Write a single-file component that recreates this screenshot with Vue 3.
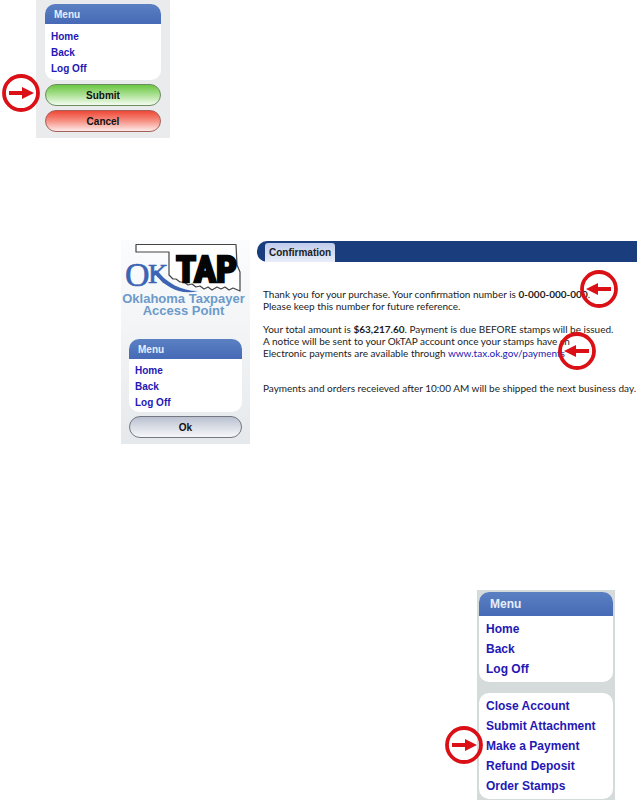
<script setup>
import { h } from 'vue'

const mainLinks = ['Home', 'Back', 'Log Off']
const accountLinks = [
  'Close Account',
  'Submit Attachment',
  'Make a Payment',
  'Refund Deposit',
  'Order Stamps'
]

const Marker = (props) =>
  h('svg', { viewBox: '0 0 38 38', width: 38, height: 38, 'aria-hidden': 'true' }, [
    h('circle', { cx: 19, cy: 19, r: 17, fill: 'none', stroke: '#da1016', 'stroke-width': 3.8 }),
    h('path', {
      d: 'M7 17H20V13L32 19L20 25V21H7Z',
      fill: '#da1016',
      transform: props.left ? 'rotate(180 19 19)' : undefined
    })
  ])
Marker.props = { left: Boolean }
</script>

<template>
  <main class="page">
    <aside class="panel panel-order">
      <nav class="card">
        <h2>Menu</h2>
        <ul>
          <li v-for="link in mainLinks" :key="link"><a href="#">{{ link }}</a></li>
        </ul>
      </nav>
      <button type="button" class="pill green">Submit</button>
      <button type="button" class="pill red">Cancel</button>
      <Marker class="marker at-submit" />
    </aside>

    <section class="confirmation">
      <aside class="panel panel-confirm">
        <div class="logo">
          <svg viewBox="0 0 129 53" width="129" height="53" role="img" aria-label="OkTAP">
            <path
              d="M15 4.5H115L116 25L119 32V51L112 48L108 50L104 47L100 49L96 47L91 50L87 47L83 49L79 46L75 47L71 44L67 45L63 42L59 42L55 39L52 39L48 35V12H15Z"
              fill="#fff" stroke="#444" stroke-width="1.2" stroke-linejoin="round"
            />
            <text x="4" y="46" class="ok-large">O</text>
            <text x="27" y="43" class="ok-small">K</text>
            <path d="M35 30C46 43 60 51 77 51C60 55 46 49 32 32Z" fill="#3b64b4" />
            <text x="55" y="42" class="tap">TAP</text>
          </svg>
          <p>Oklahoma Taxpayer<br>Access Point</p>
        </div>
        <nav class="card">
          <h2>Menu</h2>
          <ul>
            <li v-for="link in mainLinks" :key="link"><a href="#">{{ link }}</a></li>
          </ul>
        </nav>
        <button type="button" class="pill grey">Ok</button>
      </aside>

      <div class="content">
        <header class="tabs"><h1>Confirmation</h1></header>
        <div class="message">
          <p>
            Thank you for your purchase. Your confirmation number is <b>0-000-000-000</b>.<br>
            Please keep this number for future reference.
          </p>
          <p>
            Your total amount is <b>$63,217.60</b>. Payment is due BEFORE stamps will be issued.<br>
            A notice will be sent to your OkTAP account once your stamps have sh<br>
            Electronic payments are available through <a href="#">www.tax.ok.gov/payments</a>
          </p>
          <p class="notice">
            Payments and orders receieved after 10:00 AM will be shipped the next business day.
          </p>
          <Marker left class="marker at-number" />
          <Marker left class="marker at-link" />
        </div>
      </div>
    </section>

    <aside class="panel panel-account">
      <nav class="card">
        <h2>Menu</h2>
        <ul>
          <li v-for="link in mainLinks" :key="link"><a href="#">{{ link }}</a></li>
        </ul>
      </nav>
      <nav class="card">
        <ul>
          <li v-for="link in accountLinks" :key="link"><a href="#">{{ link }}</a></li>
        </ul>
      </nav>
      <Marker class="marker at-payment" />
    </aside>
  </main>
</template>

<style>
body {
  margin: 0;
  background: #fff;
}
</style>

<style scoped>
.page {
  display: flex;
  flex-direction: column;
  align-items: flex-start;
  overflow: hidden;
  font-family: "Liberation Sans", Arial, sans-serif;
  font-size: 10px;
  color: #1c1c1c;
}

h1, h2, p, ul {
  margin: 0;
  padding: 0;
}

ul {
  list-style: none;
}

a {
  color: #2418b4;
  text-decoration: none;
}

.panel {
  position: relative;
  box-sizing: border-box;
  display: flex;
  flex-direction: column;
  gap: 4px;
  flex-shrink: 0;
  background: #e9ebec;
}

.card {
  background: #fff;
  border-radius: 10px;
  font-weight: bold;
  line-height: 16px;
}

.card h2 {
  padding: 3px 9px 1px;
  border-radius: 10px 10px 0 0;
  background: linear-gradient(#5b80c2, #466ab6);
  color: #e6eefb;
  font-size: 10px;
  line-height: 16px;
}

.card ul {
  padding: 4px 6px 2px;
}

.pill {
  height: 22px;
  padding: 0;
  border: 1px solid #777;
  border-radius: 11px;
  color: #111;
  font: bold 10px "Liberation Sans", Arial, sans-serif;
}

.green {
  border-color: #6d8c62;
  background: linear-gradient(#6cc744, #a5de8c 45%, #f4fcf0);
}

.red {
  border-color: #a4605a;
  background: linear-gradient(#ef4836, #f5897c 45%, #fdeae8);
}

.grey {
  border-color: #74777f;
  background: linear-gradient(#b9c0d0, #d6dae3 45%, #f6f7f9);
}

.panel-order {
  width: 134px;
  margin-left: 36px;
  padding: 4px 9px 6px;
}

.panel-order .card ul {
  padding: 5px 6px 3px;
}

.confirmation {
  display: flex;
  align-self: stretch;
  gap: 7px;
  margin: 102px 0 0 121px;
}

.panel-confirm {
  width: 129px;
  padding: 0 8px 6px;
  background: linear-gradient(#fbfcfd, #f3f5f7 40%, #e6e9eb);
}

.logo {
  margin: 0 -8px 18px;
}

.logo svg {
  display: block;
}

.logo p {
  padding-right: 4px;
  color: #6c9ac9;
  font-size: 13px;
  font-weight: bold;
  line-height: 12px;
  text-align: center;
  white-space: nowrap;
}

.ok-large,
.ok-small {
  fill: #3b64b4;
  stroke: #3b64b4;
  stroke-width: 0.6;
  font-family: "Liberation Serif", serif;
  font-size: 34px;
}

.ok-small {
  font-size: 28px;
}

.tap {
  fill: #050505;
  stroke: #050505;
  stroke-width: 2.4;
  font-family: "Liberation Sans Narrow", "Roboto Condensed", "Liberation Sans", sans-serif;
  font-size: 37px;
  font-weight: bold;
}

.panel-confirm .card ul {
  padding-bottom: 1px;
}

.content {
  flex: 1;
  min-width: 0;
}

.tabs {
  display: flex;
  margin-top: 1px;
  padding: 2px 8px 0;
  border-radius: 10px 0 0 10px;
  background: #193d7d;
}

.tabs h1 {
  padding: 0 4px;
  border-radius: 3px 3px 0 0;
  background: linear-gradient(#bfcceb, #e8edf8);
  font-size: 10px;
  line-height: 19px;
}

.message {
  position: relative;
  display: flex;
  flex-direction: column;
  gap: 11px;
  padding: 26px 0 0 6px;
  font-family: Lato, "Liberation Sans", sans-serif;
  line-height: 12px;
  white-space: nowrap;
}

.notice {
  margin-top: 12px;
}

.panel-account {
  width: 138px;
  margin: 146px 22px 0 0;
  padding: 2px;
  align-self: flex-end;
  gap: 11px;
  background: #d5dadb;
}

.panel-account .card {
  font-size: 12px;
  line-height: 20px;
}

.panel-account h2 {
  padding: 2px 11px;
  font-size: 12px;
  line-height: 20px;
}

.panel-account .card ul {
  padding: 3px 7px;
}

.marker {
  position: absolute;
}

.at-submit {
  top: 74px;
  left: -34px;
}

.at-number {
  top: 8px;
  left: 323px;
}

.at-link {
  top: 70px;
  left: 301px;
}

.at-payment {
  top: 136px;
  left: -32px;
}
</style>
